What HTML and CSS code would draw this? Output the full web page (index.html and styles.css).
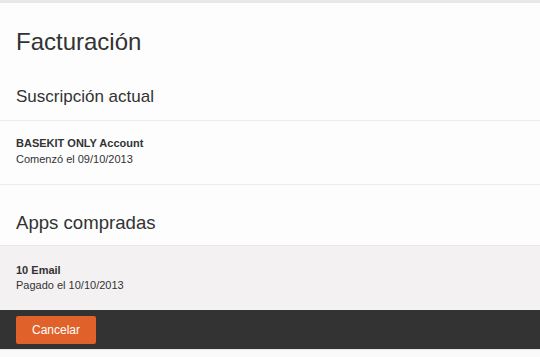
FILE: index.html
```html
<!DOCTYPE html>
<html lang="es">
<head>
    <meta charset="UTF-8">
    <meta name="viewport" content="width=device-width, initial-scale=1.0">
    <title>Facturación</title>
    <link rel="stylesheet" href="styles.css">
</head>
<body>
    <div class="top-bar"></div>
    <div class="page">
        <h1 class="page-title">Facturación</h1>

        <div class="section">
            <h2 class="section-title">Suscripción actual</h2>
        </div>
        <div class="item">
            <div class="item-name">BASEKIT ONLY Account</div>
            <div class="item-date">Comenzó el 09/10/2013</div>
        </div>

        <div class="section section-apps">
            <h2 class="section-title apps-title">Apps compradas</h2>
        </div>
        <div class="item item-shaded">
            <div class="item-name">10 Email</div>
            <div class="item-date">Pagado el 10/10/2013</div>
        </div>
    </div>

    <div class="footer">
        <button type="button" class="cancel-btn">Cancelar</button>
    </div>
</body>
</html>
```

FILE: styles.css
```css
body {
    font-family: "Liberation Sans", Arial, sans-serif;
    margin: 0;
    background: #fafafa;
    color: #333;
}

.top-bar {
    height: 3px;
    background: #e8e8e8;
}

.page {
    background: #fdfdfd;
}

.page-title {
    margin: 0;
    padding: 25px 16px 0;
    font-size: 24px;
    line-height: 28px;
    font-weight: normal;
}

.section {
    padding: 31px 16px 13px;
    border-bottom: 1px solid #ececec;
}

.section-title {
    margin: 0;
    font-size: 17px;
    line-height: 20px;
    font-weight: normal;
}

.section-apps {
    padding-top: 27px;
    padding-bottom: 11px;
    border-top: 1px solid #ececec;
    border-bottom-color: #e8e6e7;
}

.apps-title {
    font-size: 18.6px;
    line-height: 22px;
}

.item {
    padding: 14px 16px 17px;
    font-size: 11px;
    line-height: 16px;
}

.item-name {
    font-weight: bold;
}

.item-shaded {
    background: #f3f1f2;
    padding: 17px 16px 17px;
    line-height: 15px;
}

.footer {
    background: #333;
    padding: 6px 16px 5px;
    border-bottom: 1px solid #e6e6e6;
}

.cancel-btn {
    display: block;
    width: 80px;
    height: 28px;
    background: #e0612a;
    color: #fff;
    border: none;
    border-radius: 2px;
    font-family: "Liberation Sans", Arial, sans-serif;
    font-size: 12px;
    cursor: pointer;
}
```
